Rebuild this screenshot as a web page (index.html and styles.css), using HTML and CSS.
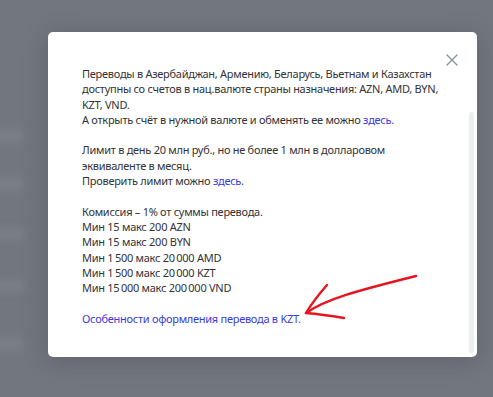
FILE: index.html
```html
<!doctype html>
<html>
<head>
<meta charset="utf-8">
<link rel="stylesheet" href="styles.css">
<title>Переводы</title>
</head>
<body>
<div class="backdrop">
    <div class="ghost ghost-1"></div>
    <div class="ghost ghost-2"></div>
    <div class="ghost ghost-3"></div>
    <div class="ghost ghost-4"></div>
    <div class="ghost ghost-5"></div>
</div>

<div class="modal">
    <button class="close" aria-label="Закрыть">
        <svg width="12" height="12" viewBox="0 0 12 12"><path d="M1 1 L11 11 M11 1 L1 11" stroke="#8c919b" stroke-width="1.4" fill="none" stroke-linecap="round"/></svg>
    </button>
    <div class="content">
        <p>Переводы в Азербайджан, Армению, Беларусь, Вьетнам и Казахстан доступны со счетов в нац.валюте страны назначения: AZN, AMD, BYN, KZT, VND.<br>
        А открыть счёт в нужной валюте и обменять ее можно <a href="#">здесь.</a></p>

        <p>Лимит в день 20 млн руб., но не более 1 млн в долларовом эквиваленте в месяц.<br>
        Проверить лимит можно <a href="#">здесь.</a></p>

        <p>Комиссия – 1% от суммы перевода.<br>
        Мин 15 макс 200 AZN<br>
        Мин 15 макс 200 BYN<br>
        Мин 1&#8201;500 макс 20&#8201;000 AMD<br>
        Мин 1&#8201;500 макс 20&#8201;000 KZT<br>
        Мин 15&#8201;000 макс 200&#8201;000 VND</p>

        <p><a href="#">Особенности оформления перевода в KZT.</a></p>
    </div>
    <div class="track"></div>
    <svg class="arrow" width="130" height="60" viewBox="0 0 130 60">
        <path d="M10 50 C 30 36, 60 28, 120 13" stroke="#e6161f" stroke-width="2.4" fill="none" stroke-linecap="round"/>
        <path d="M31 22 C 24 30, 16 40, 10 50 C 22 51, 36 53, 48 55" stroke="#e6161f" stroke-width="2.4" fill="none" stroke-linecap="round" stroke-linejoin="round"/>
    </svg>
</div>
</body>
</html>
```

FILE: styles.css
```css
html, body {
    margin: 0;
    padding: 0;
}
body {
    background-color: #72767f;
    width: 493px;
    height: 397px;
    overflow: hidden;
    position: relative;
    font-family: "Noto Sans", "Open Sans", Arial, sans-serif;
    padding: 32px 0 0 48px;
    box-sizing: border-box;
}
p {
    margin: 0 0 15.3px;
}
a {
    color: #3a3ae6;
    text-decoration: none;
}

/* blurred page behind the overlay */
.backdrop {
    position: absolute;
    inset: 0;
}
.ghost {
    position: absolute;
    left: -10px;
    width: 36px;
    height: 12px;
    border-radius: 6px;
    background: #7b7f88;
    filter: blur(5px);
}
.ghost-1 { top: 130px; }
.ghost-2 { top: 178px; }
.ghost-3 { top: 228px; }
.ghost-4 { top: 280px; }
.ghost-5 { top: 338px; }

.modal {
    position: relative;
    width: 429px;
    height: 325px;
    background: #fff;
    border-radius: 5px;
    box-shadow: 0 4px 24px rgba(40, 44, 52, 0.25);
    box-sizing: border-box;
    padding: 34px 31px 0 34px;
}
.close {
    position: absolute;
    top: 22px;
    right: 19px;
    width: 12px;
    height: 12px;
    padding: 0;
    border: 0;
    background: none;
    display: flex;
}
.content {
    font-size: 11px;
    line-height: 15.3px;
    letter-spacing: -0.27px;
    color: #333336;
}
.track {
    position: absolute;
    right: 3px;
    top: 80px;
    bottom: 4px;
    width: 5px;
    border-radius: 3px;
    background: #eceef3;
}
.arrow {
    position: absolute;
    left: 248px;
    top: 231px;
}
```
